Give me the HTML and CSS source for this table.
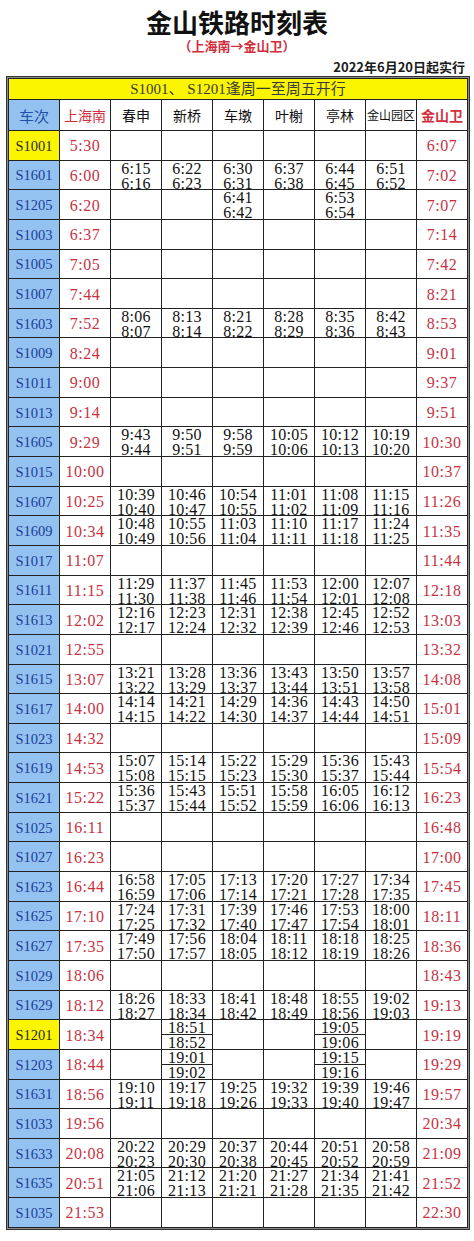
FILE: index.html
```html
<!DOCTYPE html>
<html lang="zh-CN">
<head>
<meta charset="utf-8">
<title>金山铁路时刻表</title>
<link rel="stylesheet" href="styles.css">
</head>
<body>
<div class="head">
  <h1 class="title">金山铁路时刻表</h1>
  <div class="sub">（上海南→金山卫）</div>
  <div class="date">2022年6月20日起实行</div>
</div>
<div class="frame">
  <div class="tt">
    <div class="banner">S1001、 S1201逢周一至周五开行</div>
    <div class="tr th"><div class="hno">车次</div><div class="hred">上海南</div><div>春申</div><div>新桥</div><div>车墩</div><div>叶榭</div><div>亭林</div><div class="hsm">金山园区</div><div class="hred b">金山卫</div></div>

    <div class="tr"><div class="no y">S1001</div><div class="t">5:30</div><div></div><div></div><div></div><div></div><div></div><div></div><div class="t">6:07</div></div>
    <div class="tr"><div class="no">S1601</div><div class="t">6:00</div><div class="d">6:15<br>6:16</div><div class="d">6:22<br>6:23</div><div class="d">6:30<br>6:31</div><div class="d">6:37<br>6:38</div><div class="d">6:44<br>6:45</div><div class="d">6:51<br>6:52</div><div class="t">7:02</div></div>
    <div class="tr"><div class="no">S1205</div><div class="t">6:20</div><div></div><div></div><div class="d">6:41<br>6:42</div><div></div><div class="d">6:53<br>6:54</div><div></div><div class="t">7:07</div></div>
    <div class="tr"><div class="no">S1003</div><div class="t">6:37</div><div></div><div></div><div></div><div></div><div></div><div></div><div class="t">7:14</div></div>
    <div class="tr"><div class="no">S1005</div><div class="t">7:05</div><div></div><div></div><div></div><div></div><div></div><div></div><div class="t">7:42</div></div>
    <div class="tr"><div class="no">S1007</div><div class="t">7:44</div><div></div><div></div><div></div><div></div><div></div><div></div><div class="t">8:21</div></div>
    <div class="tr"><div class="no">S1603</div><div class="t">7:52</div><div class="d">8:06<br>8:07</div><div class="d">8:13<br>8:14</div><div class="d">8:21<br>8:22</div><div class="d">8:28<br>8:29</div><div class="d">8:35<br>8:36</div><div class="d">8:42<br>8:43</div><div class="t">8:53</div></div>
    <div class="tr"><div class="no">S1009</div><div class="t">8:24</div><div></div><div></div><div></div><div></div><div></div><div></div><div class="t">9:01</div></div>
    <div class="tr"><div class="no">S1011</div><div class="t">9:00</div><div></div><div></div><div></div><div></div><div></div><div></div><div class="t">9:37</div></div>
    <div class="tr"><div class="no">S1013</div><div class="t">9:14</div><div></div><div></div><div></div><div></div><div></div><div></div><div class="t">9:51</div></div>
    <div class="tr"><div class="no">S1605</div><div class="t">9:29</div><div class="d">9:43<br>9:44</div><div class="d">9:50<br>9:51</div><div class="d">9:58<br>9:59</div><div class="d">10:05<br>10:06</div><div class="d">10:12<br>10:13</div><div class="d">10:19<br>10:20</div><div class="t">10:30</div></div>
    <div class="tr"><div class="no">S1015</div><div class="t">10:00</div><div></div><div></div><div></div><div></div><div></div><div></div><div class="t">10:37</div></div>
    <div class="tr"><div class="no">S1607</div><div class="t">10:25</div><div class="d">10:39<br>10:40</div><div class="d">10:46<br>10:47</div><div class="d">10:54<br>10:55</div><div class="d">11:01<br>11:02</div><div class="d">11:08<br>11:09</div><div class="d">11:15<br>11:16</div><div class="t">11:26</div></div>
    <div class="tr"><div class="no">S1609</div><div class="t">10:34</div><div class="d">10:48<br>10:49</div><div class="d">10:55<br>10:56</div><div class="d">11:03<br>11:04</div><div class="d">11:10<br>11:11</div><div class="d">11:17<br>11:18</div><div class="d">11:24<br>11:25</div><div class="t">11:35</div></div>
    <div class="tr"><div class="no">S1017</div><div class="t">11:07</div><div></div><div></div><div></div><div></div><div></div><div></div><div class="t">11:44</div></div>
    <div class="tr"><div class="no">S1611</div><div class="t">11:15</div><div class="d">11:29<br>11:30</div><div class="d">11:37<br>11:38</div><div class="d">11:45<br>11:46</div><div class="d">11:53<br>11:54</div><div class="d">12:00<br>12:01</div><div class="d">12:07<br>12:08</div><div class="t">12:18</div></div>
    <div class="tr"><div class="no">S1613</div><div class="t">12:02</div><div class="d">12:16<br>12:17</div><div class="d">12:23<br>12:24</div><div class="d">12:31<br>12:32</div><div class="d">12:38<br>12:39</div><div class="d">12:45<br>12:46</div><div class="d">12:52<br>12:53</div><div class="t">13:03</div></div>
    <div class="tr"><div class="no">S1021</div><div class="t">12:55</div><div></div><div></div><div></div><div></div><div></div><div></div><div class="t">13:32</div></div>
    <div class="tr"><div class="no">S1615</div><div class="t">13:07</div><div class="d">13:21<br>13:22</div><div class="d">13:28<br>13:29</div><div class="d">13:36<br>13:37</div><div class="d">13:43<br>13:44</div><div class="d">13:50<br>13:51</div><div class="d">13:57<br>13:58</div><div class="t">14:08</div></div>
    <div class="tr"><div class="no">S1617</div><div class="t">14:00</div><div class="d">14:14<br>14:15</div><div class="d">14:21<br>14:22</div><div class="d">14:29<br>14:30</div><div class="d">14:36<br>14:37</div><div class="d">14:43<br>14:44</div><div class="d">14:50<br>14:51</div><div class="t">15:01</div></div>
    <div class="tr"><div class="no">S1023</div><div class="t">14:32</div><div></div><div></div><div></div><div></div><div></div><div></div><div class="t">15:09</div></div>
    <div class="tr"><div class="no">S1619</div><div class="t">14:53</div><div class="d">15:07<br>15:08</div><div class="d">15:14<br>15:15</div><div class="d">15:22<br>15:23</div><div class="d">15:29<br>15:30</div><div class="d">15:36<br>15:37</div><div class="d">15:43<br>15:44</div><div class="t">15:54</div></div>
    <div class="tr"><div class="no">S1621</div><div class="t">15:22</div><div class="d">15:36<br>15:37</div><div class="d">15:43<br>15:44</div><div class="d">15:51<br>15:52</div><div class="d">15:58<br>15:59</div><div class="d">16:05<br>16:06</div><div class="d">16:12<br>16:13</div><div class="t">16:23</div></div>
    <div class="tr"><div class="no">S1025</div><div class="t">16:11</div><div></div><div></div><div></div><div></div><div></div><div></div><div class="t">16:48</div></div>
    <div class="tr"><div class="no">S1027</div><div class="t">16:23</div><div></div><div></div><div></div><div></div><div></div><div></div><div class="t">17:00</div></div>
    <div class="tr"><div class="no">S1623</div><div class="t">16:44</div><div class="d">16:58<br>16:59</div><div class="d">17:05<br>17:06</div><div class="d">17:13<br>17:14</div><div class="d">17:20<br>17:21</div><div class="d">17:27<br>17:28</div><div class="d">17:34<br>17:35</div><div class="t">17:45</div></div>
    <div class="tr"><div class="no">S1625</div><div class="t">17:10</div><div class="d">17:24<br>17:25</div><div class="d">17:31<br>17:32</div><div class="d">17:39<br>17:40</div><div class="d">17:46<br>17:47</div><div class="d">17:53<br>17:54</div><div class="d">18:00<br>18:01</div><div class="t">18:11</div></div>
    <div class="tr"><div class="no">S1627</div><div class="t">17:35</div><div class="d">17:49<br>17:50</div><div class="d">17:56<br>17:57</div><div class="d">18:04<br>18:05</div><div class="d">18:11<br>18:12</div><div class="d">18:18<br>18:19</div><div class="d">18:25<br>18:26</div><div class="t">18:36</div></div>
    <div class="tr"><div class="no">S1029</div><div class="t">18:06</div><div></div><div></div><div></div><div></div><div></div><div></div><div class="t">18:43</div></div>
    <div class="tr"><div class="no">S1629</div><div class="t">18:12</div><div class="d">18:26<br>18:27</div><div class="d">18:33<br>18:34</div><div class="d">18:41<br>18:42</div><div class="d">18:48<br>18:49</div><div class="d">18:55<br>18:56</div><div class="d">19:02<br>19:03</div><div class="t">19:13</div></div>
    <div class="tr"><div class="no y">S1201</div><div class="t">18:34</div><div></div><div class="s"><span>18:51</span><span>18:52</span></div><div></div><div></div><div class="s"><span>19:05</span><span>19:06</span></div><div></div><div class="t">19:19</div></div>
    <div class="tr"><div class="no">S1203</div><div class="t">18:44</div><div></div><div class="s"><span>19:01</span><span>19:02</span></div><div></div><div></div><div class="s"><span>19:15</span><span>19:16</span></div><div></div><div class="t">19:29</div></div>
    <div class="tr"><div class="no">S1631</div><div class="t">18:56</div><div class="d">19:10<br>19:11</div><div class="d">19:17<br>19:18</div><div class="d">19:25<br>19:26</div><div class="d">19:32<br>19:33</div><div class="d">19:39<br>19:40</div><div class="d">19:46<br>19:47</div><div class="t">19:57</div></div>
    <div class="tr"><div class="no">S1033</div><div class="t">19:56</div><div></div><div></div><div></div><div></div><div></div><div></div><div class="t">20:34</div></div>
    <div class="tr"><div class="no">S1633</div><div class="t">20:08</div><div class="d">20:22<br>20:23</div><div class="d">20:29<br>20:30</div><div class="d">20:37<br>20:38</div><div class="d">20:44<br>20:45</div><div class="d">20:51<br>20:52</div><div class="d">20:58<br>20:59</div><div class="t">21:09</div></div>
    <div class="tr"><div class="no">S1635</div><div class="t">20:51</div><div class="d">21:05<br>21:06</div><div class="d">21:12<br>21:13</div><div class="d">21:20<br>21:21</div><div class="d">21:27<br>21:28</div><div class="d">21:34<br>21:35</div><div class="d">21:41<br>21:42</div><div class="t">21:52</div></div>
    <div class="tr"><div class="no">S1035</div><div class="t">21:53</div><div></div><div></div><div></div><div></div><div></div><div></div><div class="t">22:30</div></div>
  </div>
</div>
</body>
</html>
```
FILE: styles.css
```css
* { box-sizing: border-box; }

body {
  margin: 0;
  background: #fff;
  color: #111;
  font-family: "Liberation Serif", "Noto Sans CJK SC", serif;
}

.head { text-align: center; }

.title {
  margin: 0;
  padding-top: 7px;
  font: bold 26px/30px "Noto Sans CJK SC", sans-serif;
  color: #111;
}

.sub {
  margin-top: 1px;
  font: bold 13px/16px "Noto Sans CJK SC", sans-serif;
  color: #d0303c;
}

.date {
  margin-top: 5px;
  padding-right: 9px;
  text-align: right;
  font: bold 13px/16px "Noto Sans CJK SC", sans-serif;
  color: #1a1a1a;
}

.frame {
  margin: 1px 0 0 6px;
  width: 464px;
  border: 1px solid #333;
  padding: 1px;
  background: #8c8c8c;
}

.tt {
  display: flex;
  flex-direction: column;
  gap: 1px;
  padding: 1px;
  background: #222;
}

.banner {
  height: 20px;
  background: #fbf500;
  color: #3a3a3a;
  font: 15px/20px "Liberation Serif", "Noto Sans CJK SC", serif;
  text-align: center;
}

.tr {
  display: grid;
  grid-template-columns: repeat(9, 50px);
  grid-template-rows: minmax(0, 1fr);
  gap: 1px;
  height: 28.65px;
  flex: none;
}

.tr > div {
  background: #fff;
  min-height: 0;
}

.th { height: 30px; }

.th > div {
  display: flex;
  align-items: center;
  justify-content: center;
  font: 14px/1 "Noto Sans CJK SC", sans-serif;
  color: #111;
}

.th > .hno {
  background: #93c2f0;
  color: #1f4fa8;
  font-size: 15px;
}

.th > .hred { color: #d42f3d; }
.th > .b { font-weight: bold; }
.th > .hsm { font-size: 12px; }

.tr > .no {
  display: flex;
  align-items: center;
  justify-content: center;
  padding-top: 2px;
  background: #93c2f0;
  color: #1d3c9a;
  font-size: 14.5px;
}

.tr > .no.y { background: #fbf500; color: #2a2a2a; }

.t {
  display: flex;
  align-items: center;
  justify-content: center;
  padding-top: 2px;
  color: #c8323f;
  font-size: 16px;
  letter-spacing: 0.5px;
}

.d {
  padding-top: 0;
  text-align: center;
  font-size: 16px;
  line-height: 15px;
  letter-spacing: 0.3px;
  color: #111;
}

.s {
  display: flex;
  flex-direction: column;
  padding-top: 1px;
  text-align: center;
  font-size: 16px;
  letter-spacing: 0.3px;
  color: #111;
}

.s span { line-height: 15px; flex: none; }
.s span:first-child {
  line-height: 13px;
  border-bottom: 1px solid #222;
}
```
